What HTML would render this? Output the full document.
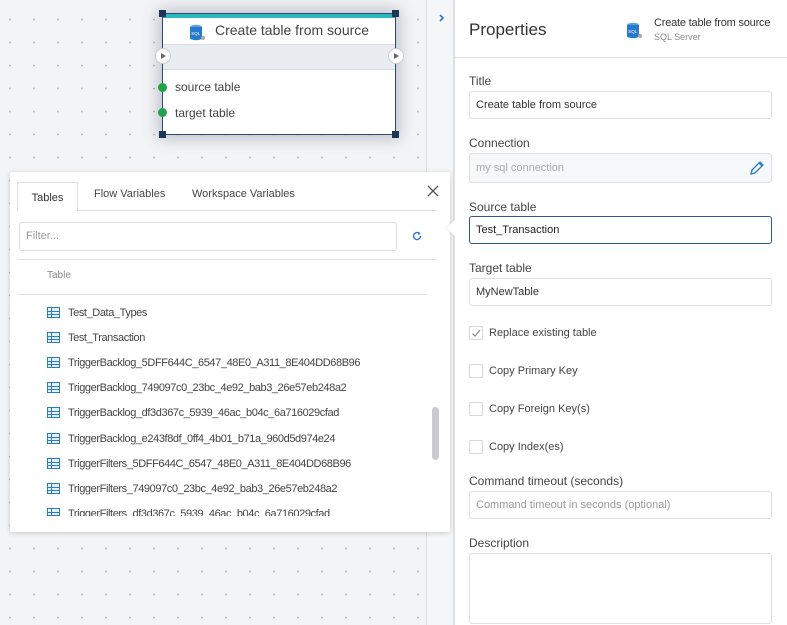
<!DOCTYPE html>
<html><head><style>
*{box-sizing:border-box;margin:0;padding:0}
body{width:787px;height:625px;overflow:hidden;font-family:"Liberation Sans",sans-serif;position:relative;background:#f3f4f6;color:#333}
.canvas{position:absolute;left:0;top:0;width:426px;height:625px;background-color:#f3f4f6;background-image:radial-gradient(circle,#b9bdc4 0.8px,transparent 1.1px);background-size:24px 23px;background-position:-2px 8px}
.strip{position:absolute;left:426px;top:0;width:28px;height:625px;background:#f5f6f8;border-left:1px solid #dcdfe3;border-right:1px solid #dcdfe3}
.panel{position:absolute;left:454px;top:0;width:333px;height:625px;background:#fff}
.node{position:absolute;left:162px;top:13px;width:234px;height:122px;background:#fff;border:1px solid #2c4a74;box-shadow:0 0 14px 4px rgba(60,70,100,.28)}
.h{position:absolute;width:7px;height:7px;background:#1d3557}
.lbl{position:absolute;font-size:12px;color:#444}
.inp{position:absolute;left:15px;width:303px;height:28px;border:1px solid #dcdfe3;border-radius:3px;font-size:11px;padding:0 6px;line-height:26px;color:#333;background:#fff}
.cb{position:absolute;left:15px;width:14px;height:14px;border:1px solid #d5d8dc;border-radius:2px;background:#fff}
.cbl{position:absolute;left:35px;font-size:11px;color:#444}
.row{position:absolute;left:58px;font-size:11px;color:#444;height:14px;line-height:14px;letter-spacing:-0.4px;white-space:nowrap}
.ti{position:absolute;left:-21px;top:1px;width:13px;height:11px;border:1.5px solid #2c7bc9;background:linear-gradient(#2c7bc9,#2c7bc9) 0 3px/100% 1px no-repeat,linear-gradient(#2c7bc9,#2c7bc9) 0 6px/100% 1px no-repeat,linear-gradient(#2c7bc9,#2c7bc9) 3px 0/1px 100% no-repeat,#e6f0fa}
</style></head><body>
<div class="canvas"></div>
<div class="strip"><svg style="position:absolute;left:11px;top:13px" width="8" height="10"><path d="M2 2 L5 5 L2 8" stroke="#2c7bc9" stroke-width="1.6" fill="none"/></svg></div>

<div class="node">
 <div style="position:absolute;left:0;top:0;width:100%;height:4px;background:#2bb8bd"></div>
 <svg style="position:absolute;left:26px;top:10px" width="16" height="17"><ellipse cx="7" cy="3" rx="6" ry="2.2" fill="#5aa0e0"/><rect x="1" y="3" width="12" height="11" fill="#2779c9"/><ellipse cx="7" cy="14" rx="6" ry="2.2" fill="#2779c9"/><text x="2.2" y="11" font-size="4.5" fill="#fff" font-family="Liberation Sans">SQL</text><circle cx="14" cy="14" r="2" fill="#aaa"/></svg>
 <div style="position:absolute;left:52px;top:8px;font-size:14px;color:#444">Create table from source</div>
 <div style="position:absolute;left:0;top:30px;width:100%;height:26px;background:#e9ecf1;border-top:1px solid #d9dde3;border-bottom:1px solid #d9dde3"></div>
 <div style="position:absolute;left:-8px;top:34px;width:16px;height:16px;border-radius:50%;background:#fff;border:1px solid #ccc"><div style="position:absolute;left:5px;top:4px;border-left:5px solid #666;border-top:3.5px solid transparent;border-bottom:3.5px solid transparent"></div></div>
 <div style="position:absolute;left:225px;top:34px;width:16px;height:16px;border-radius:50%;background:#fff;border:1px solid #ccc"><div style="position:absolute;left:5px;top:4px;border-left:5px solid #666;border-top:3.5px solid transparent;border-bottom:3.5px solid transparent"></div></div>
 <div style="position:absolute;left:-5px;top:69px;width:9px;height:9px;border-radius:50%;background:#1fa34a"></div>
 <div style="position:absolute;left:-5px;top:94px;width:9px;height:9px;border-radius:50%;background:#1fa34a"></div>
 <div style="position:absolute;left:12px;top:66px;font-size:12px;color:#444">source table</div>
 <div style="position:absolute;left:12px;top:92px;font-size:12px;color:#444">target table</div>
</div>
<div class="h" style="left:159px;top:10px"></div><div class="h" style="left:392px;top:10px"></div>
<div class="h" style="left:159px;top:131px"></div><div class="h" style="left:392px;top:131px"></div>

<div style="position:absolute;left:10px;top:172px;width:440px;height:360px;background:#fff;box-shadow:0 1px 6px rgba(0,0,0,.18);border-radius:2px">
 <div style="position:absolute;left:7px;top:10px;width:61px;height:29px;border:1px solid #dcdfe3;border-bottom:none;background:#fff;z-index:2;font-size:11px;text-align:center;line-height:30px;color:#333">Tables</div>
 <div style="position:absolute;left:7px;top:38px;width:420px;border-top:1px solid #dcdfe3"></div>
 <div style="position:absolute;left:84px;top:16px;font-size:11px;color:#444">Flow Variables</div>
 <div style="position:absolute;left:182px;top:16px;font-size:11px;color:#444">Workspace Variables</div>
 <svg style="position:absolute;left:417px;top:13px" width="12" height="12"><path d="M1 1L11 11M11 1L1 11" stroke="#555" stroke-width="1.3"/></svg>
 <div style="position:absolute;left:9px;top:50px;width:378px;height:29px;border:1px solid #dcdfe3;border-radius:3px;font-size:11px;color:#999;padding-left:6px;line-height:27px">Filter...</div>
 <svg style="position:absolute;left:402px;top:59px" width="10" height="10"><path d="M8.5 5A3.5 3.5 0 1 1 7 2.2" stroke="#2c7bc9" stroke-width="1.4" fill="none"/><path d="M5.5 0.5L8.5 2L6.5 4.5Z" fill="#2c7bc9"/></svg>
 <div style="position:absolute;left:7px;top:87px;width:420px;border-top:1px solid #dcdfe3"></div>
 <div style="position:absolute;left:37px;top:98px;font-size:10px;color:#888">Table</div>
 <div style="position:absolute;left:7px;top:122px;width:410px;border-top:1px solid #dcdfe3"></div>
 <div style="position:absolute;left:0;top:128px;width:420px;height:216px;overflow:hidden">
  <div class="row" style="top:6px"><i class="ti"></i>Test_Data_Types</div>
  <div class="row" style="top:31px"><i class="ti"></i>Test_Transaction</div>
  <div class="row" style="top:56px"><i class="ti"></i>TriggerBacklog_5DFF644C_6547_48E0_A311_8E404DD68B96</div>
  <div class="row" style="top:81px"><i class="ti"></i>TriggerBacklog_749097c0_23bc_4e92_bab3_26e57eb248a2</div>
  <div class="row" style="top:106px"><i class="ti"></i>TriggerBacklog_df3d367c_5939_46ac_b04c_6a716029cfad</div>
  <div class="row" style="top:132px"><i class="ti"></i>TriggerBacklog_e243f8df_0ff4_4b01_b71a_960d5d974e24</div>
  <div class="row" style="top:157px"><i class="ti"></i>TriggerFilters_5DFF644C_6547_48E0_A311_8E404DD68B96</div>
  <div class="row" style="top:182px"><i class="ti"></i>TriggerFilters_749097c0_23bc_4e92_bab3_26e57eb248a2</div>
  <div class="row" style="top:207px"><i class="ti"></i>TriggerFilters_df3d367c_5939_46ac_b04c_6a716029cfad</div>
 </div>
 <div style="position:absolute;left:422px;top:235px;width:7px;height:53px;border-radius:4px;background:#c9cbce"></div>
</div>

<div class="panel">
 <div style="position:absolute;left:0;top:57px;width:333px;border-top:1px solid #dcdfe3"></div>
 <div style="position:absolute;left:15px;top:20px;font-size:17px;color:#333">Properties</div>
 <svg style="position:absolute;left:172px;top:22px" width="16" height="17"><ellipse cx="7" cy="3" rx="6" ry="2.2" fill="#5aa0e0"/><rect x="1" y="3" width="12" height="11" fill="#2779c9"/><ellipse cx="7" cy="14" rx="6" ry="2.2" fill="#2779c9"/><text x="2.2" y="11" font-size="4.5" fill="#fff" font-family="Liberation Sans">SQL</text><circle cx="14" cy="14" r="2" fill="#aaa"/></svg>
 <div style="position:absolute;left:200px;top:17px;font-size:11px;color:#333;letter-spacing:-0.2px">Create table from source</div>
 <div style="position:absolute;left:200px;top:32px;font-size:9px;color:#888">SQL Server</div>
 <div class="lbl" style="left:15px;top:74px">Title</div>
 <div class="inp" style="top:91px">Create table from source</div>
 <div class="lbl" style="left:15px;top:136px">Connection</div>
 <div class="inp" style="top:153px;height:30px;background:#f7f8fa;color:#aaa;line-height:28px">my sql connection</div>
 <svg style="position:absolute;left:295px;top:160px" width="16" height="16"><path d="M2 14L3 10L11 2L14 5L6 13Z M10 3L13 6" stroke="#2c7bc9" stroke-width="1.3" fill="none"/></svg>
 <div class="lbl" style="left:15px;top:200px">Source table</div>
 <div class="inp" style="top:216px;border-color:#2c5a88;color:#222">Test_Transaction</div>
 <div class="lbl" style="left:15px;top:261px">Target table</div>
 <div class="inp" style="top:278px">MyNewTable</div>
 <div class="cb" style="top:326px"><svg width="12" height="12" style="position:absolute;left:0;top:0"><path d="M2.5 6.5L5 9L10 3" stroke="#888" stroke-width="1.2" fill="none"/></svg></div>
 <div class="cbl" style="top:327px">Replace existing table</div>
 <div class="cb" style="top:364px"></div><div class="cbl" style="top:365px">Copy Primary Key</div>
 <div class="cb" style="top:402px"></div><div class="cbl" style="top:403px">Copy Foreign Key(s)</div>
 <div class="cb" style="top:440px"></div><div class="cbl" style="top:441px">Copy Index(es)</div>
 <div class="lbl" style="left:15px;top:474px">Command timeout (seconds)</div>
 <div class="inp" style="top:491px;color:#999">Command timeout in seconds (optional)</div>
 <div class="lbl" style="left:15px;top:536px">Description</div>
 <div class="inp" style="top:553px;height:71px"></div>
</div>
<div style="position:absolute;left:454px;top:0;height:625px;border-left:1px solid #dcdfe3"></div>
<div style="position:absolute;left:449px;top:222px;width:12px;height:12px;background:#fff;transform:rotate(45deg);box-shadow:-1px 1px 2px rgba(0,0,0,.08)"></div>
</body></html>
